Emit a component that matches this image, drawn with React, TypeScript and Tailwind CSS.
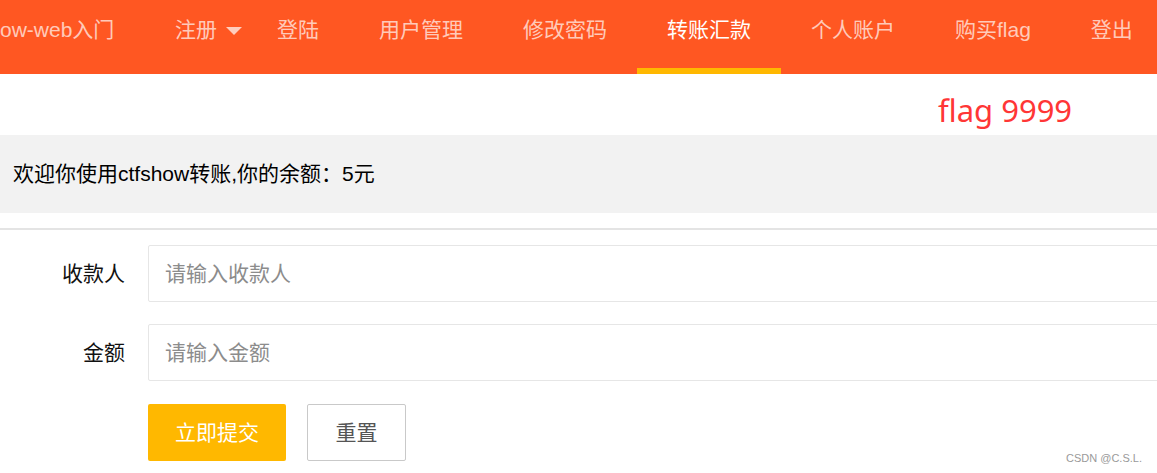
const NAV = ['登陆', '用户管理', '修改密码', '转账汇款', '个人账户', '购买flag', '登出'];

const CN = { fontFamily: '"Liberation Sans", "Noto Sans CJK SC", sans-serif' };

export default function App() {
  return (
    <div className="relative w-[1157px] h-[473px] overflow-hidden bg-white" style={CN}>
      {/* top nav */}
      <div className="flex h-[74px] bg-[#FF5722] text-[21px] text-white/70 whitespace-nowrap">
        <div className="w-[145px] shrink-0 pt-[15px] leading-[30px]">ow-web入门</div>
        <div className="flex shrink-0 items-start pl-[30px] pr-[5px] pt-[15px] leading-[30px]">
          <span>注册</span>
          <svg className="ml-[9px] mt-[12px]" width="16" height="8" viewBox="0 0 16 8">
            <path d="M0 0 L16 0 L8 8 Z" fill="currentColor" />
          </svg>
        </div>
        {NAV.map((t) => {
          const active = t === '转账汇款';
          return (
            <div
              key={t}
              className={
                active
                  ? 'shrink-0 px-[30px] pt-[15px] leading-[30px] text-white border-b-[6px] border-[#FFB800]'
                  : 'shrink-0 px-[30px] pt-[15px] leading-[30px]'
              }
            >
              {t}
            </div>
          );
        })}
      </div>

      {/* flag count */}
      <div className="flex h-[61px] items-center pt-[12px] pl-[938px]">
        <span className="text-[31px] text-[#FF3636] leading-none" style={{ fontFamily: '"Noto Sans", sans-serif' }}>
          flag 9999
        </span>
      </div>

      {/* welcome bar */}
      <div className="flex h-[78px] items-center bg-[#f2f2f2] pl-[13px] text-[21px] text-black">
        欢迎你使用ctfshow转账,你的余额：5元
      </div>

      <div className="mt-[15px] h-[2px] bg-[#e4e4e4]" />

      {/* form */}
      <div className="mt-[15px] flex flex-col gap-[22px]">
        <div className="flex items-center">
          <label className="w-[148px] shrink-0 pr-[23px] text-right text-[21px] text-[#111]">收款人</label>
          <input
            className="h-[57px] w-[1030px] shrink-0 rounded-[2px] border border-[#e6e6e6] px-[16px] text-[21px] outline-none placeholder:text-[#8c8c8c]"
            placeholder="请输入收款人"
          />
        </div>
        <div className="flex items-center">
          <label className="w-[148px] shrink-0 pr-[23px] text-right text-[21px] text-[#111]">金额</label>
          <input
            className="h-[57px] w-[1030px] shrink-0 rounded-[2px] border border-[#e6e6e6] px-[16px] text-[21px] outline-none placeholder:text-[#8c8c8c]"
            placeholder="请输入金额"
          />
        </div>
        <div className="mt-px flex gap-[21px] pl-[148px]">
          <button className="h-[57px] w-[138px] rounded-[2px] bg-[#FFB800] text-[21px] text-white">立即提交</button>
          <button className="h-[57px] w-[99px] rounded-[2px] border border-[#c9c9c9] bg-white text-[21px] text-[#555]">
            重置
          </button>
        </div>
      </div>

      {/* watermark */}
      <div className="absolute right-[15px] bottom-[7px] text-[11px] text-[#9a9a9a]">CSDN @C.S.L.</div>
    </div>
  );
}
